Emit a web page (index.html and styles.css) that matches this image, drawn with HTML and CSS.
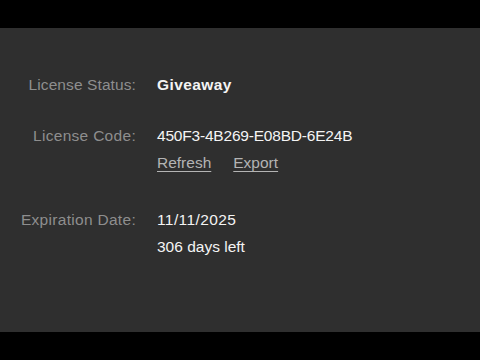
FILE: index.html
```html
<!DOCTYPE html>
<html>
<head>
<meta charset="utf-8">
<link rel="stylesheet" href="styles.css">
</head>
<body>
<div class="bar"></div>
<main class="panel">
  <div class="row row-status">
    <div class="label">License Status:</div>
    <div class="value"><div class="line strong">Giveaway</div></div>
  </div>
  <div class="row row-code">
    <div class="label">License Code:</div>
    <div class="value">
      <div class="line code">450F3-4B269-E08BD-6E24B</div>
      <div class="line links"><a class="link" href="#">Refresh</a><a class="link" href="#">Export</a></div>
    </div>
  </div>
  <div class="row">
    <div class="label">Expiration Date:</div>
    <div class="value">
      <div class="line wide">11/11/2025</div>
      <div class="line">306 days left</div>
    </div>
  </div>
</main>
<div class="bar"></div>
</body>
</html>
```

FILE: styles.css
```css
html, body {
  margin: 0;
  padding: 0;
  background: #000;
  width: 480px;
  height: 360px;
  overflow: hidden;
}
body {
  display: flex;
  flex-direction: column;
  font-family: "Liberation Sans", Arial, sans-serif;
  font-size: 15.5px;
}
.bar {
  height: 28px;
  background: #000;
}
.panel {
  height: 304px;
  background: #2f2f2f;
  padding-top: 43px;
  box-sizing: border-box;
}
.row {
  display: flex;
  gap: 21px;
  line-height: 27px;
}
.row-status { margin-bottom: 24px; }
.row-code { margin-bottom: 30px; }
.label {
  width: 136px;
  text-align: right;
  color: #8e8e8e;
  letter-spacing: 0.3px;
}
.row-status .label { letter-spacing: 0.1px; }
.value {
  display: flex;
  flex-direction: column;
  color: #f4f4f4;
}
.strong {
  font-weight: bold;
  letter-spacing: 0.4px;
}
.code { letter-spacing: -0.2px; }
.wide { letter-spacing: 0.4px; }
.links {
  display: flex;
  gap: 22px;
}
.link {
  color: #b4b4b4;
  text-decoration: underline;
  text-underline-offset: 3px;
}
```
